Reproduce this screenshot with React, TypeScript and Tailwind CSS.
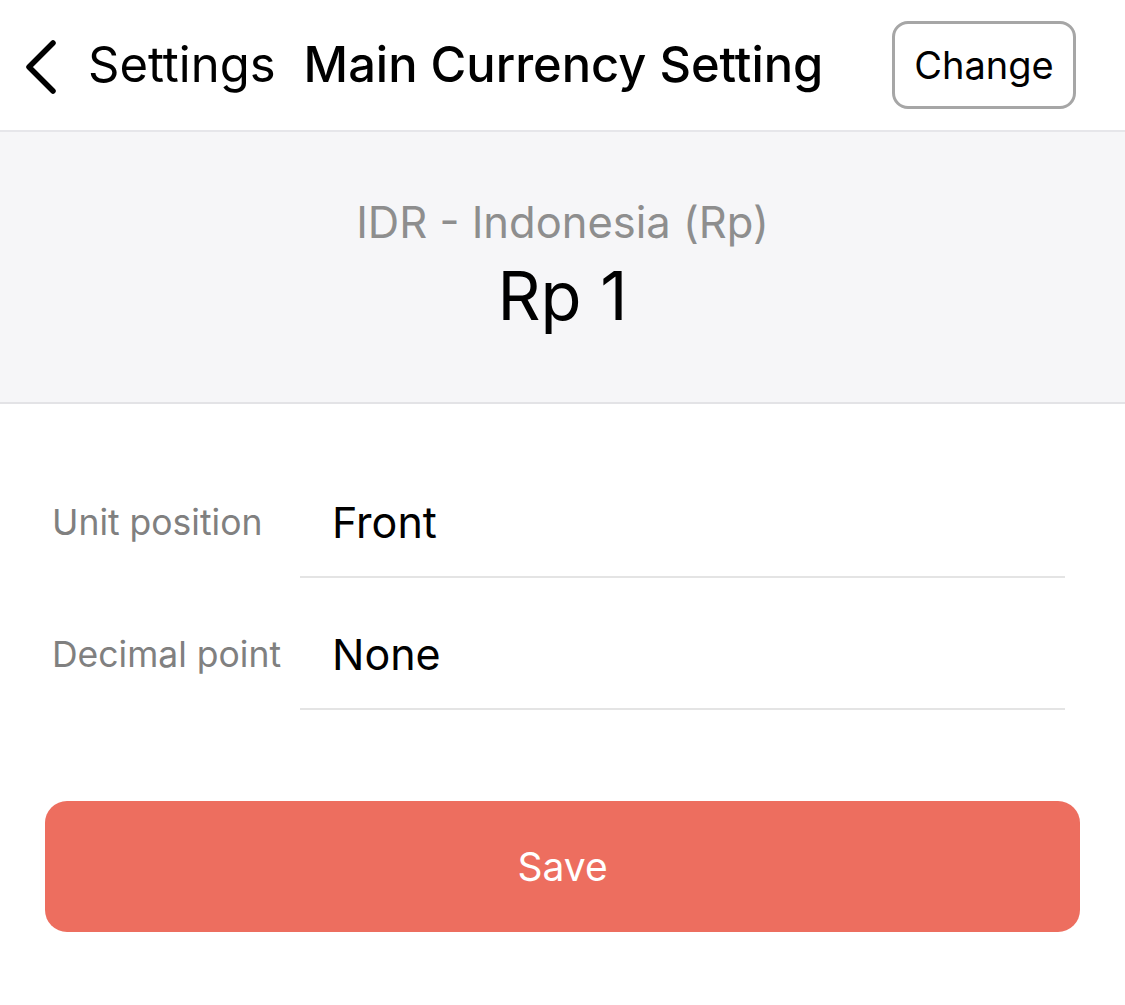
const font = { fontFamily: "Inter, 'Noto Sans', sans-serif" };

function BackIcon() {
  return (
    <svg width="40" height="60" viewBox="0 0 40 60" fill="none" className="shrink-0">
      <polyline
        points="33,8 9,32 33,56"
        stroke="#000"
        strokeWidth="5.5"
        strokeLinecap="round"
        strokeLinejoin="round"
      />
    </svg>
  );
}

function Row({ label, value }: { label: string; value: string }) {
  return (
    <div className="flex h-[132px] items-stretch">
      <div className="flex w-[300px] items-center pl-[52px] pt-[22px] text-[35.5px] text-[#808080]">
        {label}
      </div>
      <div className="mr-[60px] flex flex-1 items-center border-b-2 border-[#e4e4e4] pl-[32px] pt-[22px] text-[43px] text-black">
        {value}
      </div>
    </div>
  );
}

export default function App() {
  return (
    <div className="h-[1005px] w-[1125px] bg-white" style={font}>
      {/* Header */}
      <div className="flex h-[132px] items-center border-b-2 border-[#e6e6ea] pl-[20px] pr-[49px]">
        <BackIcon />
        <span className="ml-[28px] text-[49px] text-black">Settings</span>
        <span className="ml-[28px] text-[48.8px] font-medium text-black">Main Currency Setting</span>
        <div className="flex-1" />
        <button className="flex h-[88px] w-[184px] items-center justify-center rounded-[16px] border-[3px] border-[#a6a6a6] text-[38px] text-black">
          Change
        </button>
      </div>

      {/* Preview */}
      <div className="flex h-[272px] flex-col items-center justify-center border-b-2 border-[#e3e3e6] bg-[#f6f6f8]">
        <div className="mt-[-10px] text-[43.5px] leading-tight text-[#8e8e8e]">IDR - Indonesia (Rp)</div>
        <div className="mt-[12px] text-[67px] leading-none text-black">Rp 1</div>
      </div>

      {/* Options */}
      <div className="pt-[42px]">
        <Row label="Unit position" value="Front" />
        <Row label="Decimal point" value="None" />
      </div>

      <div className="px-[45px] pt-[91px]">
        <button className="flex h-[131px] w-full items-center justify-center rounded-[22px] bg-[#ed6e5f] pt-[2px] text-[39px] text-white">
          Save
        </button>
      </div>
    </div>
  );
}
